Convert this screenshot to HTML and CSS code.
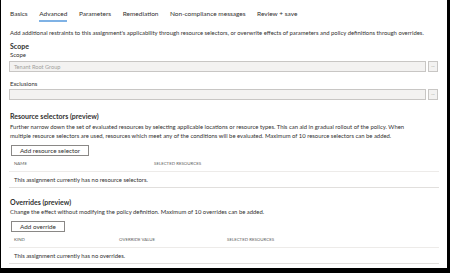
FILE: index.html
```html
<!DOCTYPE html>
<html>
<head>
<meta charset="utf-8">
<link rel="stylesheet" href="styles.css">
</head>
<body>
<div class="frame">
  <div class="page">
    <nav class="tabs">
      <span class="tab">Basics</span>
      <span class="tab active">Advanced</span>
      <span class="tab">Parameters</span>
      <span class="tab">Remediation</span>
      <span class="tab">Non-compliance messages</span>
      <span class="tab">Review + save</span>
    </nav>
    <p class="intro">Add additional restraints to this assignment's applicability through resource selectors, or overwrite effects of parameters and policy definitions through overrides.</p>

    <h2 class="heading scope-h">Scope</h2>
    <div class="label">Scope</div>
    <div class="field-row">
      <div class="field">Tenant Root Group</div>
      <div class="dots">...</div>
    </div>
    <div class="label excl">Exclusions</div>
    <div class="field-row">
      <div class="field"></div>
      <div class="dots">...</div>
    </div>

    <h2 class="heading rs-h">Resource selectors (preview)</h2>
    <p class="desc">Further narrow down the set of evaluated resources by selecting applicable locations or resource types. This can aid in gradual rollout of the policy. When multiple resource selectors are used, resources which meet any of the conditions will be evaluated. Maximum of 10 resource selectors can be added.</p>
    <button class="btn btn-rs">Add resource selector</button>
    <div class="thead two">
      <span>Name</span>
      <span>Selected resources</span>
    </div>
    <div class="trow">This assignment currently has no resource selectors.</div>

    <h2 class="heading ov-h">Overrides (preview)</h2>
    <p class="desc one">Change the effect without modifying the policy definition. Maximum of 10 overrides can be added.</p>
    <button class="btn btn-ov">Add override</button>
    <div class="thead three">
      <span>Kind</span>
      <span>Override value</span>
      <span>Selected resources</span>
    </div>
    <div class="trow">This assignment currently has no overrides.</div>
  </div>
</div>
</body>
</html>
```
FILE: styles.css
```css
* { box-sizing: border-box; }
html, body { margin: 0; padding: 0; }
body {
  width: 450px;
  height: 273px;
  overflow: hidden;
  background: #000;
  font-family: Lato, "Noto Sans", sans-serif;
  color: #323130;
}
.frame {
  width: 450px;
  height: 273px;
  border-left: 1px solid #000;
  border-right: 3px solid #000;
  border-bottom: 5px solid #000;
  background: #fff;
}
.page {
  padding: 0 9px 0 8px;
  display: flex;
  flex-direction: column;
}
.tabs {
  display: flex;
  gap: 11.5px;
  height: 22px;
  padding-left: 1px;
  font-size: 6.5px;
  color: #323130;
}
.tab {
  display: flex;
  align-items: center;
  height: 22px;
  padding-top: 6px;
  border-bottom: 2px solid transparent;
}
.tab.active {
  border-bottom-color: #7fb2e5;
}
.intro {
  margin: 6px 0 0 1px;
  font-size: 5.9px;
  line-height: 9px;
  white-space: nowrap;
}
.heading {
  margin: 0;
  font-size: 7px;
  font-weight: 700;
  line-height: 9px;
  padding-left: 1px;
}
.scope-h { margin-top: 5px; }
.label {
  font-size: 6px;
  line-height: 8px;
  padding-left: 1px;
  margin-bottom: 2px;
}
.label.excl { margin-top: 8px; margin-bottom: 1px; }
.field-row {
  display: flex;
  gap: 2px;
  align-items: stretch;
}
.field {
  width: 419px;
  height: 11px;
  background: #f3f2f1;
  border: 1px solid #c8c6c4;
  font-size: 5.6px;
  line-height: 9px;
  color: #a19f9d;
  padding-left: 4px;
}
.dots {
  width: 10px;
  height: 11px;
  border: 1px solid #c8c6c4;
  background: #f3f2f1;
  color: #a19f9d;
  font-size: 5px;
  line-height: 7px;
  text-align: center;
}
.rs-h { margin-top: 12px; }
.desc {
  margin: 1px 0 0 1px;
  font-size: 5.9px;
  line-height: 9px;
  width: 412px;
}
.btn {
  align-self: flex-start;
  margin: 5px 0 0 2px;
  height: 11px;
  padding: 0;
  border: 1px solid #8a8886;
  background: #fff;
  font-family: inherit;
  font-size: 6.3px;
  color: #323130;
  line-height: 9px;
}
.btn-rs { width: 78px; }
.btn-ov { width: 54px; }
.thead {
  display: grid;
  height: 16px;
  align-items: center;
  padding-left: 5px;
  font-size: 4.4px;
  text-transform: uppercase;
  color: #605e5c;
  border-bottom: 1px solid #edebe9;
  width: 430px;
}
.thead.two { grid-template-columns: 140px 1fr; }
.thead.three { grid-template-columns: 105px 108px 1fr; }
.trow {
  height: 16px;
  line-height: 15px;
  padding-left: 5px;
  font-size: 5.9px;
  border-bottom: 1px solid #e1dfdd;
  width: 430px;
}
.ov-h { margin-top: 10px; }
.one { margin-top: 0; width: 430px; }
```
